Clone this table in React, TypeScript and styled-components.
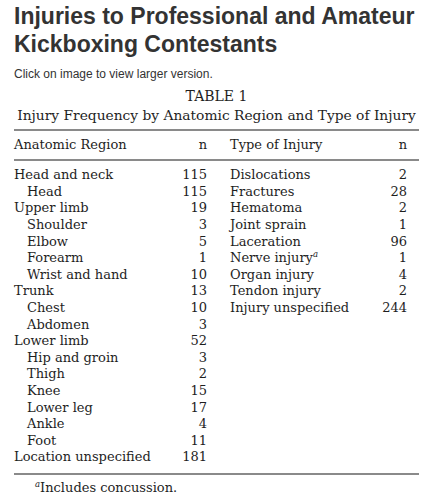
import React from "react";
import styled, { createGlobalStyle } from "styled-components";

const GlobalStyle = createGlobalStyle`
  html, body {
    margin: 0;
    padding: 0;
    background: #fff;
  }
`;

const Page = styled.div`
  width: 433px;
  padding: 2px 10px 0 14px;
  box-sizing: border-box;
`;

const Title = styled.h1`
  margin: 0;
  font-family: "Liberation Sans", Arial, sans-serif;
  font-weight: bold;
  font-size: 23px;
  line-height: 28px;
  color: #333;
`;

const Note = styled.p`
  margin: 8.5px 0 0 0;
  font-family: "Liberation Sans", Arial, sans-serif;
  font-size: 12px;
  line-height: 14px;
  color: #333;
`;

const Figure = styled.div`
  width: 405px;
  margin-top: 7.6px;
  font-family: "DejaVu Serif", "Liberation Serif", serif;
  color: #1e1e1e;
`;

const Caption = styled.div<{ $size: number; $after: number }>`
  text-align: center;
  font-size: ${(p) => p.$size}px;
  line-height: 16px;
  margin-bottom: ${(p) => p.$after}px;
`;

const Rule = styled.div`
  height: 2px;
  background: #8a8a8a;
`;

const Columns = styled.div`
  display: grid;
  grid-template-columns: 193px 177px;
  column-gap: 23px;
`;

const Block = styled.div<{ $top: number; $bottom: number }>`
  padding: ${(p) => p.$top}px 0 ${(p) => p.$bottom}px 0;
`;

const Row = styled.div<{ $indent?: boolean }>`
  display: flex;
  justify-content: space-between;
  font-size: 13px;
  line-height: 16.6px;
  padding-left: ${(p) => (p.$indent ? 13 : 0)}px;
`;

const Sup = styled.sup`
  font-style: italic;
  font-size: 8.5px;
  line-height: 0;
`;

const Footnote = styled.div`
  font-size: 13px;
  line-height: 16px;
  margin-top: 5.2px;
  padding-left: 21px;
`;

type Item = { label: React.ReactNode; n: number; indent?: boolean };

const regions: Item[] = [
  { label: "Head and neck", n: 115 },
  { label: "Head", n: 115, indent: true },
  { label: "Upper limb", n: 19 },
  { label: "Shoulder", n: 3, indent: true },
  { label: "Elbow", n: 5, indent: true },
  { label: "Forearm", n: 1, indent: true },
  { label: "Wrist and hand", n: 10, indent: true },
  { label: "Trunk", n: 13 },
  { label: "Chest", n: 10, indent: true },
  { label: "Abdomen", n: 3, indent: true },
  { label: "Lower limb", n: 52 },
  { label: "Hip and groin", n: 3, indent: true },
  { label: "Thigh", n: 2, indent: true },
  { label: "Knee", n: 15, indent: true },
  { label: "Lower leg", n: 17, indent: true },
  { label: "Ankle", n: 4, indent: true },
  { label: "Foot", n: 11, indent: true },
  { label: "Location unspecified", n: 181 },
];

const types: Item[] = [
  { label: "Dislocations", n: 2 },
  { label: "Fractures", n: 28 },
  { label: "Hematoma", n: 2 },
  { label: "Joint sprain", n: 1 },
  { label: "Laceration", n: 96 },
  {
    label: (
      <span>
        Nerve injury<Sup>a</Sup>
      </span>
    ),
    n: 1,
  },
  { label: "Organ injury", n: 4 },
  { label: "Tendon injury", n: 2 },
  { label: "Injury unspecified", n: 244 },
];

const List = ({ items }: { items: Item[] }) => (
  <div>
    {items.map((it, i) => (
      <Row key={i} $indent={it.indent}>
        <span>{it.label}</span>
        <span>{it.n}</span>
      </Row>
    ))}
  </div>
);

export default function App() {
  return (
    <>
      <GlobalStyle />
      <Page>
        <Title>Injuries to Professional and Amateur Kickboxing Contestants</Title>
        <Note>Click on image to view larger version.</Note>
        <Figure>
          <Caption $size={14} $after={3.35}>
            TABLE 1
          </Caption>
          <Caption $size={13.8} $after={5.8}>
            Injury Frequency by Anatomic Region and Type of Injury
          </Caption>
          <Rule />
          <Block $top={6.2} $bottom={5.2}>
            <Columns>
              <Row>
                <span>Anatomic Region</span>
                <span>n</span>
              </Row>
              <Row>
                <span>Type of Injury</span>
                <span>n</span>
              </Row>
            </Columns>
          </Block>
          <Rule />
          <Block $top={6} $bottom={7}>
            <Columns>
              <List items={regions} />
              <List items={types} />
            </Columns>
          </Block>
          <Rule />
          <Footnote>
            <Sup>a</Sup>Includes concussion.
          </Footnote>
        </Figure>
      </Page>
    </>
  );
}
